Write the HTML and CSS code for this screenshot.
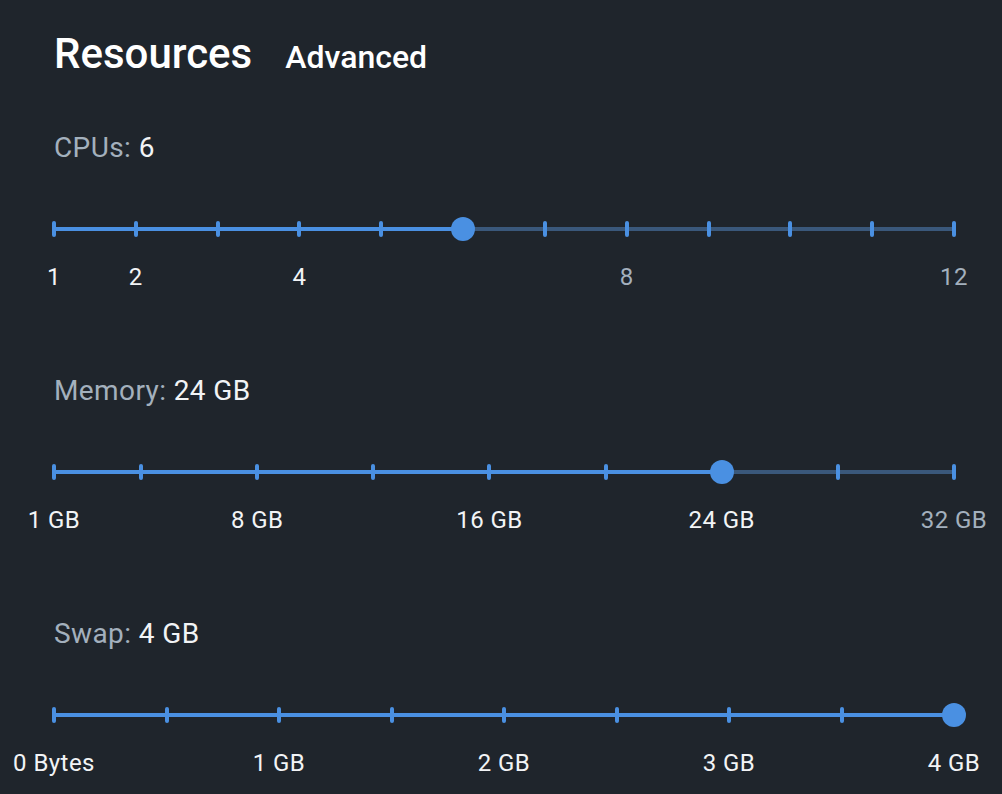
FILE: index.html
```html
<!DOCTYPE html>
<html>
<head>
    <title>Resources</title>
    <link rel="stylesheet" href="styles.css">
</head>
<body>
    <div class="container">
        <div class="header">
            <h1>Resources</h1>
            <h2>Advanced</h2>
        </div>

        <div class="field">
            <div class="field-label">CPUs: <span class="field-value">6</span></div>
            <div class="slider">
                <div class="track"></div>
                <div class="track-fill" style="width: 45.4545%"></div>
                <span class="tick" style="left: 0%"></span>
                <span class="tick" style="left: 9.0909%"></span>
                <span class="tick" style="left: 18.1818%"></span>
                <span class="tick" style="left: 27.2727%"></span>
                <span class="tick" style="left: 36.3636%"></span>
                <span class="tick" style="left: 45.4545%"></span>
                <span class="tick" style="left: 54.5455%"></span>
                <span class="tick" style="left: 63.6364%"></span>
                <span class="tick" style="left: 72.7273%"></span>
                <span class="tick" style="left: 81.8182%"></span>
                <span class="tick" style="left: 90.9091%"></span>
                <span class="tick" style="left: 100%"></span>
                <span class="thumb" style="left: 45.4545%"></span>
            </div>
            <div class="tick-labels">
                <span class="tick-label" style="left: 0%">1</span>
                <span class="tick-label" style="left: 9.0909%">2</span>
                <span class="tick-label" style="left: 27.2727%">4</span>
                <span class="tick-label inactive" style="left: 63.6364%">8</span>
                <span class="tick-label inactive" style="left: 100%">12</span>
            </div>
        </div>

        <div class="field">
            <div class="field-label">Memory: <span class="field-value">24 GB</span></div>
            <div class="slider">
                <div class="track"></div>
                <div class="track-fill" style="width: 74.1935%"></div>
                <span class="tick" style="left: 0%"></span>
                <span class="tick" style="left: 9.6774%"></span>
                <span class="tick" style="left: 22.5806%"></span>
                <span class="tick" style="left: 35.4839%"></span>
                <span class="tick" style="left: 48.3871%"></span>
                <span class="tick" style="left: 61.2903%"></span>
                <span class="tick" style="left: 74.1935%"></span>
                <span class="tick" style="left: 87.0968%"></span>
                <span class="tick" style="left: 100%"></span>
                <span class="thumb" style="left: 74.1935%"></span>
            </div>
            <div class="tick-labels">
                <span class="tick-label" style="left: 0%">1 GB</span>
                <span class="tick-label" style="left: 22.5806%">8 GB</span>
                <span class="tick-label" style="left: 48.3871%">16 GB</span>
                <span class="tick-label" style="left: 74.1935%">24 GB</span>
                <span class="tick-label inactive" style="left: 100%">32 GB</span>
            </div>
        </div>

        <div class="field">
            <div class="field-label">Swap: <span class="field-value">4 GB</span></div>
            <div class="slider">
                <div class="track"></div>
                <div class="track-fill" style="width: 100%"></div>
                <span class="tick" style="left: 0%"></span>
                <span class="tick" style="left: 12.5%"></span>
                <span class="tick" style="left: 25%"></span>
                <span class="tick" style="left: 37.5%"></span>
                <span class="tick" style="left: 50%"></span>
                <span class="tick" style="left: 62.5%"></span>
                <span class="tick" style="left: 75%"></span>
                <span class="tick" style="left: 87.5%"></span>
                <span class="tick" style="left: 100%"></span>
                <span class="thumb" style="left: 100%"></span>
            </div>
            <div class="tick-labels">
                <span class="tick-label" style="left: 0%">0 Bytes</span>
                <span class="tick-label" style="left: 25%">1 GB</span>
                <span class="tick-label" style="left: 50%">2 GB</span>
                <span class="tick-label" style="left: 75%">3 GB</span>
                <span class="tick-label" style="left: 100%">4 GB</span>
            </div>
        </div>
    </div>
</body>
</html>
```

FILE: styles.css
```css
body {
    margin: 0;
    background-color: #1f252c;
    color: #f2f4f6;
    font-family: Roboto, "Noto Sans", sans-serif;
    min-height: 100vh;
    overflow: hidden;
}

/* Main column, track runs from x=54 to x=954 */
.container {
    width: 900px;
    padding: 29px 0 0 54px;
}

.header {
    display: flex;
    align-items: baseline;
    gap: 33px;
}

h1 {
    margin: 0;
    font-size: 42px;
    font-weight: 500;
    line-height: 50px;
    color: #ffffff;
}

h2 {
    margin: 0;
    font-size: 32px;
    font-weight: 500;
    line-height: 38px;
    color: #ffffff;
}

.field {
    margin-top: 52px;
}

.field + .field {
    margin-top: 83px;
}

.field-label {
    font-size: 28px;
    line-height: 33px;
    letter-spacing: 0.4px;
    color: #a3b0bd;
}

.field-value {
    color: #f2f4f6;
}

/* Slider */
.slider {
    position: relative;
    height: 24px;
    margin-top: 53px;
}

.track,
.track-fill {
    position: absolute;
    left: 0;
    top: 10px;
    height: 4px;
    border-radius: 2px;
}

.track {
    width: 100%;
    background-color: #3a587b;
}

.track-fill {
    background-color: #4a90e2;
}

.tick {
    position: absolute;
    top: 4px;
    width: 4px;
    height: 16px;
    margin-left: -2px;
    border-radius: 2px;
    background-color: #4a90e2;
}

.thumb {
    position: absolute;
    top: 0;
    width: 24px;
    height: 24px;
    margin-left: -12px;
    border-radius: 50%;
    background-color: #4a90e2;
}

.tick-labels {
    position: relative;
    height: 28px;
    margin-top: 22px;
}

.tick-label {
    position: absolute;
    top: 0;
    transform: translateX(-50%);
    font-size: 24px;
    line-height: 28px;
    letter-spacing: 0.45px;
    white-space: nowrap;
    color: #f2f4f6;
}

.tick-label.inactive {
    color: #a3b0bd;
}
```
